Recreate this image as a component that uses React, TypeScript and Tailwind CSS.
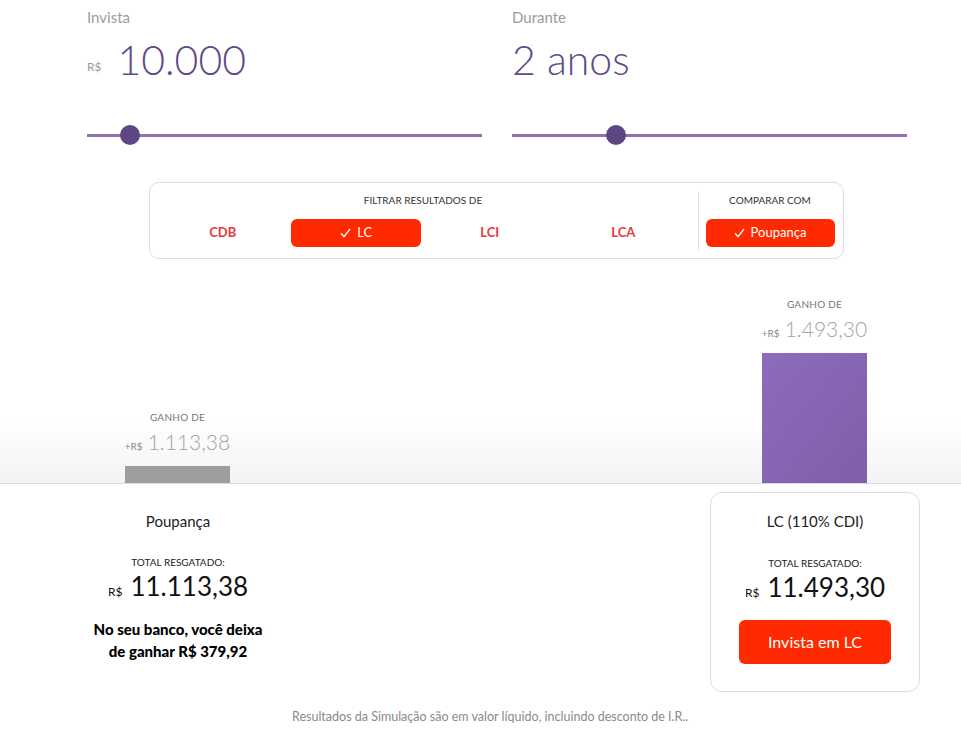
import React from 'react'

const Check = () => (
  <svg width="11" height="10" viewBox="0 0 11 10" fill="none" className="mr-[6px]">
    <path d="M1 5.2 L4 8.6 L10 1" stroke="white" strokeWidth="1.4" />
  </svg>
)

function Slider({ label, pos, children }: { label: string; pos: number; children: React.ReactNode }) {
  return (
    <div className="w-[395px]">
      <div className="text-[15px] text-[#9b9b9b] leading-none pt-[10px]">{label}</div>
      <div className="h-[54px] mt-[1px] flex items-end">{children}</div>
      <div className="relative mt-[44px] h-[22px] flex items-center">
        <div className="h-[3px] w-full bg-[#8e72b4]" />
        <div
          className="absolute top-[1px] w-[20px] h-[20px] rounded-full bg-[#5e4683]"
          style={{ left: pos - 10 }}
        />
      </div>
    </div>
  )
}

function Filter({ label, active }: { label: string; active?: boolean }) {
  return (
    <div className="w-[133.5px] flex justify-center">
      {active ? (
        <div className="w-[130px] h-[28px] rounded-[6px] bg-[#ff2a00] text-white text-[13px] flex items-center justify-center">
          <Check />
          {label}
        </div>
      ) : (
        <div className="h-[28px] flex items-center text-[13px] font-bold text-[#e23c3c]">{label}</div>
      )}
    </div>
  )
}

function Gain({ value }: { value: string }) {
  return (
    <div className="flex flex-col items-center mb-[12px]">
      <div className="text-[10px] text-[#777] tracking-wide">GANHO DE</div>
      <div className="flex items-baseline mt-[6px] text-[#a3a3a3]">
        <span className="text-[10px] text-[#888] mr-[5px]">+R$</span>
        <span className="text-[21px] font-light leading-none">{value}</span>
      </div>
    </div>
  )
}

function Total({ value }: { value: string }) {
  return (
    <div className="flex flex-col items-center">
      <div className="text-[10px] text-[#222] leading-none">TOTAL RESGATADO:</div>
      <div className="flex items-baseline mt-[6px] text-[#111]">
        <span className="text-[12px] mr-[8px]">R$</span>
        <span className="text-[26px] leading-none">{value}</span>
      </div>
    </div>
  )
}

export default function App() {
  return (
    <div className="w-[961px] h-[744px] bg-white overflow-hidden" style={{ fontFamily: 'Lato, "Open Sans", sans-serif' }}>
      <div className="flex gap-[30px] pl-[87px]">
        <Slider label="Invista" pos={43}>
          <span className="text-[12px] text-[#9b9b9b] mb-[4px] mr-[16px]">R$</span>
          <span className="text-[41px] font-light text-[#5e4a8b] leading-none">10.000</span>
        </Slider>
        <Slider label="Durante" pos={104}>
          <span className="text-[41px] font-light text-[#5e4a8b] leading-none">2 anos</span>
        </Slider>
      </div>

      <div className="ml-[149px] mt-[36px] w-[695px] h-[77px] rounded-[10px] border border-[#dedede] flex px-[6px]">
        <div className="w-[534px] flex flex-col items-center pt-[12px]">
          <div className="text-[10px] text-[#333] leading-none">FILTRAR RESULTADOS DE</div>
          <div className="flex mt-[14px]">
            <Filter label="CDB" />
            <Filter label="LC" active />
            <Filter label="LCI" />
            <Filter label="LCA" />
          </div>
        </div>
        <div className="w-px bg-[#e2e2e2] my-[8px] ml-[8px]" />
        <div className="flex-1 flex flex-col items-center pt-[12px] pl-[6px] pr-[2px]">
          <div className="text-[10px] text-[#333] leading-none">COMPARAR COM</div>
          <div className="mt-[14px] w-[129px] h-[28px] rounded-[6px] bg-[#ff2a00] text-white text-[13px] flex items-center justify-center">
            <Check />
            Poupança
          </div>
        </div>
      </div>

      <div className="mt-[11px] h-[214px] border-b border-[#dcdcdc] bg-gradient-to-b from-white from-[70%] to-[#f3f3f3] flex items-end pl-[125px]">
        <div className="w-[105px] flex flex-col items-center">
          <Gain value="1.113,38" />
          <div className="w-[105px] h-[17px] bg-[#9e9e9e]" />
        </div>
        <div className="w-[532px]" />
        <div className="w-[105px] flex flex-col items-center">
          <Gain value="1.493,30" />
          <div className="w-[105px] h-[130px] bg-gradient-to-br from-[#8d6bbd] to-[#7f5fa8]" />
        </div>
      </div>

      <div className="flex pt-[8px]">
        <div className="w-[356px] flex flex-col items-center pt-[18px]">
          <div className="text-[15px] text-[#222]">Poupança</div>
          <div className="mt-[24px]">
            <Total value="11.113,38" />
          </div>
          <div className="mt-[17px] text-[15px] font-black text-black text-center leading-[22px]">
            No seu banco, você deixa
            <br />
            de ganhar R$ 379,92
          </div>
        </div>
        <div className="w-[354px]" />
        <div className="w-[210px] h-[200px] rounded-[12px] border border-[#dcdcdc] flex flex-col items-center pt-[17px]">
          <div className="text-[15px] text-[#222]">LC (110% CDI)</div>
          <div className="mt-[25px]">
            <Total value="11.493,30" />
          </div>
          <div className="mt-[18px] w-[152px] h-[44px] rounded-[6px] bg-[#ff2a00] text-white text-[16px] flex items-center justify-center">
            Invista em LC
          </div>
        </div>
      </div>

      <div className="mt-[16px] pl-[292px] text-[12.5px] text-[#8a8a8a]">
        Resultados da Simulação são em valor líquido, incluindo desconto de I.R..
      </div>
    </div>
  )
}
